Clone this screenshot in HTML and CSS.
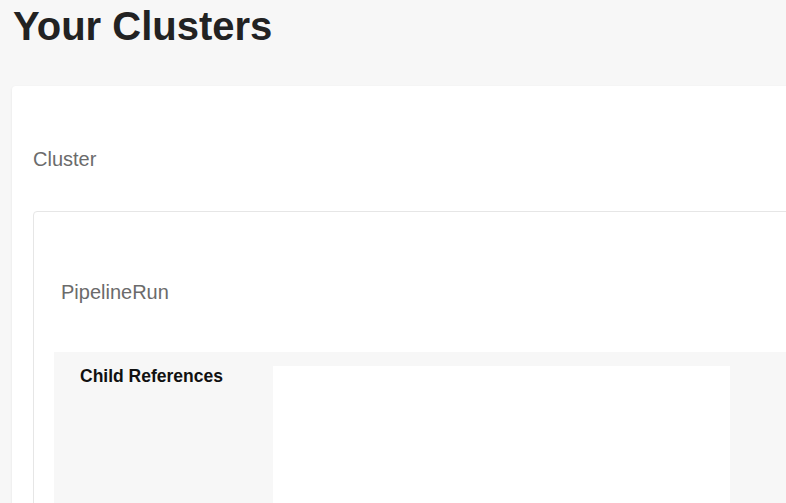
FILE: index.html
```html
<!DOCTYPE html>
<html>
<head>
<meta charset="utf-8">
<link rel="stylesheet" href="styles.css">
</head>
<body>
<div class="page">
  <h1 class="title">Your Clusters</h1>
  <section class="card">
    <h2 class="card-heading">Cluster</h2>
    <section class="inner-card">
      <h3 class="inner-heading">PipelineRun</h3>
      <div class="detail">
        <div class="detail-label">Child References</div>
        <div class="detail-value"></div>
      </div>
    </section>
  </section>
</div>
</body>
</html>
```
FILE: styles.css
```css
html, body {
  margin: 0;
  padding: 0;
  background: #f7f7f7;
  overflow: hidden;
}
body {
  font-family: "Liberation Sans", Arial, sans-serif;
  color: #222;
}
.page {
  width: 1100px;
  padding-left: 12px;
}
.title {
  margin: 0;
  padding: 3px 0 0 1px;
  font-size: 40px;
  line-height: 46px;
  font-weight: bold;
  color: #222;
}
.card {
  margin-top: 37px;
  background: #fff;
  border-radius: 4px;
  box-shadow: 0 1px 3px rgba(0, 0, 0, 0.08);
  padding: 62px 0 0 21px;
  height: 600px;
}
.card-heading {
  margin: 0;
  font-size: 20px;
  line-height: 23px;
  font-weight: normal;
  color: #6b6b6b;
}
.inner-card {
  margin-top: 40px;
  border: 1px solid #e6e6e6;
  border-radius: 4px;
  padding: 69px 0 0 0;
  height: 500px;
}
.inner-heading {
  margin: 0 0 0 27px;
  font-size: 20px;
  line-height: 23px;
  font-weight: normal;
  color: #6b6b6b;
}
.detail {
  margin: 48px 0 0 20px;
  background: #f7f7f7;
  display: grid;
  grid-template-columns: 219px 457px 1fr;
  padding-top: 14px;
  height: 300px;
}
.detail-label {
  padding-left: 26px;
  font-size: 17.5px;
  line-height: 20px;
  font-weight: bold;
  color: #111;
}
.detail-value {
  background: #fff;
}
```
